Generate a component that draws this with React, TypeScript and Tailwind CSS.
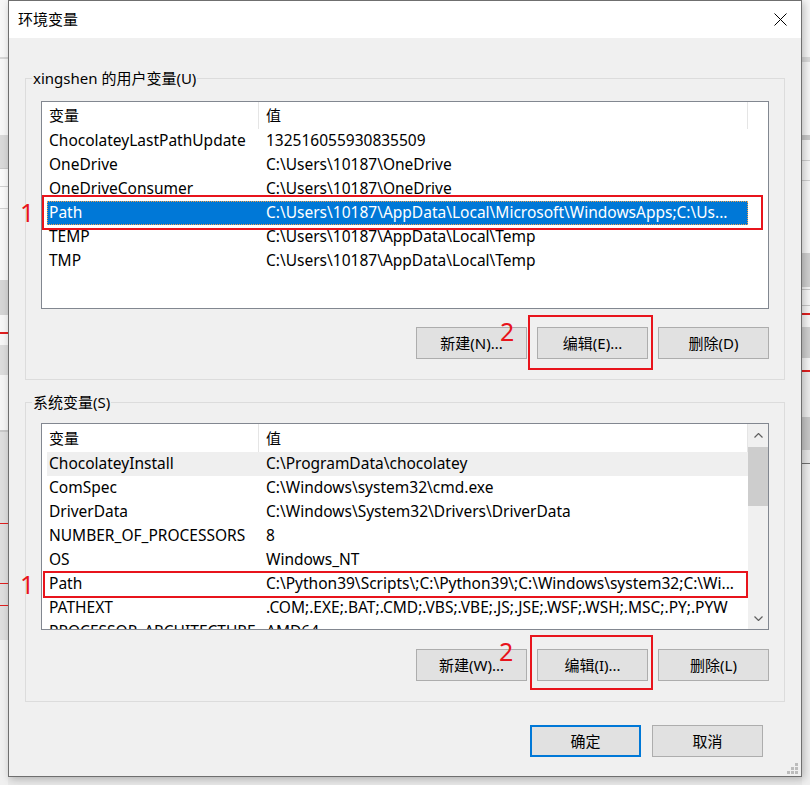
import type { ReactNode } from "react";

type Row = [string, string];

const userVars: Row[] = [
  ["ChocolateyLastPathUpdate", "132516055930835509"],
  ["OneDrive", "C:\\Users\\10187\\OneDrive"],
  ["OneDriveConsumer", "C:\\Users\\10187\\OneDrive"],
  ["Path", "C:\\Users\\10187\\AppData\\Local\\Microsoft\\WindowsApps;C:\\Us..."],
  ["TEMP", "C:\\Users\\10187\\AppData\\Local\\Temp"],
  ["TMP", "C:\\Users\\10187\\AppData\\Local\\Temp"],
];

const systemVars: Row[] = [
  ["ChocolateyInstall", "C:\\ProgramData\\chocolatey"],
  ["ComSpec", "C:\\Windows\\system32\\cmd.exe"],
  ["DriverData", "C:\\Windows\\System32\\Drivers\\DriverData"],
  ["NUMBER_OF_PROCESSORS", "8"],
  ["OS", "Windows_NT"],
  ["Path", "C:\\Python39\\Scripts\\;C:\\Python39\\;C:\\Windows\\system32;C:\\Wi..."],
  ["PATHEXT", ".COM;.EXE;.BAT;.CMD;.VBS;.VBE;.JS;.JSE;.WSF;.WSH;.MSC;.PY;.PYW"],
  ["PROCESSOR_ARCHITECTURE", "AMD64"],
];

// bits of the window behind the dialog
const leftStrip = [
  "h-[57px] bg-[#f7f7f7]",
  "h-[2px] bg-[#d6d6d6]",
  "h-[76px] bg-[#f7f7f7]",
  "h-[33px] bg-[#d9d9d9]",
  "h-px bg-[#c8c8c8]",
  "h-[17px] bg-[#fafafa]",
  "h-px bg-[#d0d0d0]",
  "h-[21px] bg-[#fafafa]",
  "h-px bg-[#d0d0d0]",
  "h-[71px] bg-[#f7f7f7]",
  "h-[35px] bg-[#d5d5d5]",
  "h-[17px] bg-[#f7f7f7]",
  "h-[2px] bg-[#e02020]",
  "h-[11px] bg-[#f7f7f7]",
  "h-[30px] bg-[#dcdcdc]",
  "h-[55px] bg-[#f5f5f5]",
  "h-[2px] bg-[#c8c8c8]",
  "h-[91px] bg-[#dedede]",
  "h-px bg-[#e02020]",
  "h-[59px] bg-[#dedede]",
  "h-px bg-[#e02020]",
  "h-[21px] bg-[#dedede]",
  "h-px bg-[#e02020]",
  "h-[34px] bg-[#dedede]",
  "flex-1 bg-[#f0f0f0]",
];

const rightStrip = [
  "h-[57px] bg-[#f7f7f7]",
  "h-[5px] bg-[#dadada]",
  "h-[73px] bg-[#f7f7f7]",
  "h-[5px] bg-[#c8c8c8]",
  "h-[20px] bg-[#f7f7f7]",
  "h-px bg-[#d0d0d0]",
  "h-[19px] bg-[#f7f7f7]",
  "h-px bg-[#d0d0d0]",
  "h-[72px] bg-[#f7f7f7]",
  "h-[34px] bg-[#d0d0d0]",
  "h-[2px] bg-[#f7f7f7]",
  "h-px bg-[#c8c8c8]",
  "h-[15px] bg-[#f7f7f7]",
  "h-px bg-[#c8c8c8]",
  "h-[7px] bg-[#f7f7f7]",
  "h-[2px] bg-[#e02020]",
  "h-[12px] bg-[#f7f7f7]",
  "h-[31px] bg-[#d0d0d0]",
  "h-[12px] bg-[#f7f7f7]",
  "h-[2px] bg-[#e02020]",
  "h-[45px] bg-[#ededed]",
  "h-[33px] bg-[#c8c8c8]",
  "h-[13px] bg-[#e8e8e8]",
  "h-px bg-[#707070]",
  "flex-1 bg-[#efefef]",
];

function Chevron({ down }: { down?: boolean }) {
  return (
    <svg width="9" height="5" viewBox="0 0 9 5">
      <path
        d={down ? "M0.5 0.5L4.5 4.5L8.5 0.5" : "M0.5 4.5L4.5 0.5L8.5 4.5"}
        fill="none"
        stroke="#606060"
        strokeWidth="1.2"
      />
    </svg>
  );
}

function ScrollBar() {
  return (
    <div className="flex h-full flex-col bg-[#f0f0f0]">
      <div className="flex h-[22px] items-center justify-center">
        <Chevron />
      </div>
      <div className="mt-px h-[59px] bg-[#cdcdcd]" />
      <div className="flex-1" />
      <div className="flex h-[22px] items-center justify-center">
        <Chevron down />
      </div>
    </div>
  );
}

interface VarListProps {
  rows: Row[];
  height: string;
  headerHeight: string;
  selected?: number;
  hover?: number;
  scroll?: boolean;
  annotation: ReactNode;
}

function VarList({ rows, height, headerHeight, selected, hover, scroll, annotation }: VarListProps) {
  return (
    <div className={`relative border border-[#828790] bg-white ${height}`}>
      <div className="flex h-full">
        <div className="flex-1 overflow-hidden pl-[5px]">
          <div className={`flex ${headerHeight}`}>
            <div className="flex w-[212px] items-center border-r border-[#e5e5e5] pl-[2px]">变量</div>
            <div className="flex flex-1 items-center border-r border-[#e5e5e5] pl-[7px]">值</div>
          </div>
          {rows.map(([name, value], i) => (
            <div
              key={name}
              className={`flex h-[24px] items-center whitespace-nowrap text-[15.5px] ${
                i === selected
                  ? "bg-[#0078d7] text-white outline-1 outline-dotted outline-[#f2a04c] -outline-offset-1"
                  : i === hover
                    ? "bg-[#efefef]"
                    : ""
              }`}
            >
              <div className="w-[212px] overflow-hidden pl-[2px]">{name}</div>
              <div className="flex-1 overflow-hidden pl-[7px]">{value}</div>
            </div>
          ))}
        </div>
        <div className="w-[20px]">{scroll && <ScrollBar />}</div>
      </div>
      {annotation}
    </div>
  );
}

function Btn({ children, primary }: { children: ReactNode; primary?: boolean }) {
  return (
    <button
      className={`flex h-[32px] w-[111px] items-center justify-center bg-[#e1e1e1] text-[15px] ${
        primary ? "border-2 border-[#0078d7]" : "border border-[#adadad]"
      }`}
    >
      {children}
    </button>
  );
}

function Mark({ children, className }: { children: ReactNode; className: string }) {
  return (
    <span className={`absolute text-[25px] leading-none text-[#e8141c] ${className}`}>{children}</span>
  );
}

export default function App() {
  return (
    <div className="flex h-[785px] w-[810px] overflow-hidden bg-[#f0f0f0] font-['Noto_Sans','Noto_Sans_CJK_SC',sans-serif] text-[15px] text-black">
      <div className="flex w-[8px] flex-col">
        {leftStrip.map((c, i) => (
          <div key={i} className={c} />
        ))}
      </div>

      <div className="flex w-[794px] flex-col">
        <div className="relative z-10 flex h-[777px] flex-col border border-[#6f6f6f] bg-[#f0f0f0] shadow-[2px_2px_8px_rgba(0,0,0,0.25)]">
          <div className="flex h-[37px] items-center justify-between bg-white pl-[9px] pr-[14px]">
            <span>环境变量</span>
            <svg width="13" height="13" viewBox="0 0 13 13">
              <path d="M0.5 0.5L12.5 12.5M12.5 0.5L0.5 12.5" stroke="#000" strokeWidth="1" />
            </svg>
          </div>

          <fieldset className="mx-[16px] mt-[30px] border border-[#dcdcdc] px-[15px] pt-[13px] pb-[20px]">
            <legend className="ml-[-9px] px-px leading-[20px]">xingshen 的用户变量(U)</legend>
            <VarList
              rows={userVars}
              height="h-[208px]"
              headerHeight="h-[27px]"
              selected={3}
              annotation={
                <>
                  <div className="absolute top-[93px] left-0 h-[35px] w-[721px] border-2 border-[#e8141c]" />
                  <Mark className="top-[98px] left-[-22px]">1</Mark>
                </>
              }
            />
            <div className="mt-[18px] flex justify-end gap-[10px]">
              <Btn>新建(N)...</Btn>
              <div className="relative">
                <Btn>编辑(E)...</Btn>
                <div className="absolute top-[-12px] left-[-9px] h-[55px] w-[125px] border-2 border-[#e8141c]" />
                <Mark className="top-[-8px] left-[-37px]">2</Mark>
              </div>
              <Btn>删除(D)</Btn>
            </div>
          </fieldset>

          <fieldset className="mx-[16px] mt-[12px] border border-[#dcdcdc] px-[15px] pt-[11px] pb-[20px]">
            <legend className="ml-[-9px] px-px leading-[20px]">系统变量(S)</legend>
            <VarList
              rows={systemVars}
              height="h-[207px]"
              headerHeight="h-[28px]"
              hover={0}
              scroll
              annotation={
                <>
                  <div className="absolute top-[147px] left-px h-[27px] w-[705px] border-2 border-[#e8141c]" />
                  <Mark className="top-[148px] left-[-22px]">1</Mark>
                </>
              }
            />
            <div className="mt-[19px] flex justify-end gap-[10px]">
              <Btn>新建(W)...</Btn>
              <div className="relative">
                <Btn>编辑(I)...</Btn>
                <div className="absolute top-[-14px] left-[-7px] h-[55px] w-[123px] border-2 border-[#e8141c]" />
                <Mark className="top-[-10px] left-[-38px]">2</Mark>
              </div>
              <Btn>删除(L)</Btn>
            </div>
          </fieldset>

          <div className="mt-[23px] flex justify-end gap-[11px] pr-[38px]">
            <Btn primary>确定</Btn>
            <Btn>取消</Btn>
          </div>

          <svg className="absolute right-[3px] bottom-[2px]" width="11" height="11" viewBox="0 0 11 11">
            <g fill="#bcbcbc">
              <rect x="8" y="0" width="3" height="3" />
              <rect x="4" y="4" width="3" height="3" />
              <rect x="8" y="4" width="3" height="3" />
              <rect x="0" y="8" width="3" height="3" />
              <rect x="4" y="8" width="3" height="3" />
              <rect x="8" y="8" width="3" height="3" />
            </g>
          </svg>
        </div>
        <div className="flex-1 bg-[#e9e9e9]" />
      </div>

      <div className="flex flex-1 flex-col">
        {rightStrip.map((c, i) => (
          <div key={i} className={c} />
        ))}
      </div>
    </div>
  );
}
